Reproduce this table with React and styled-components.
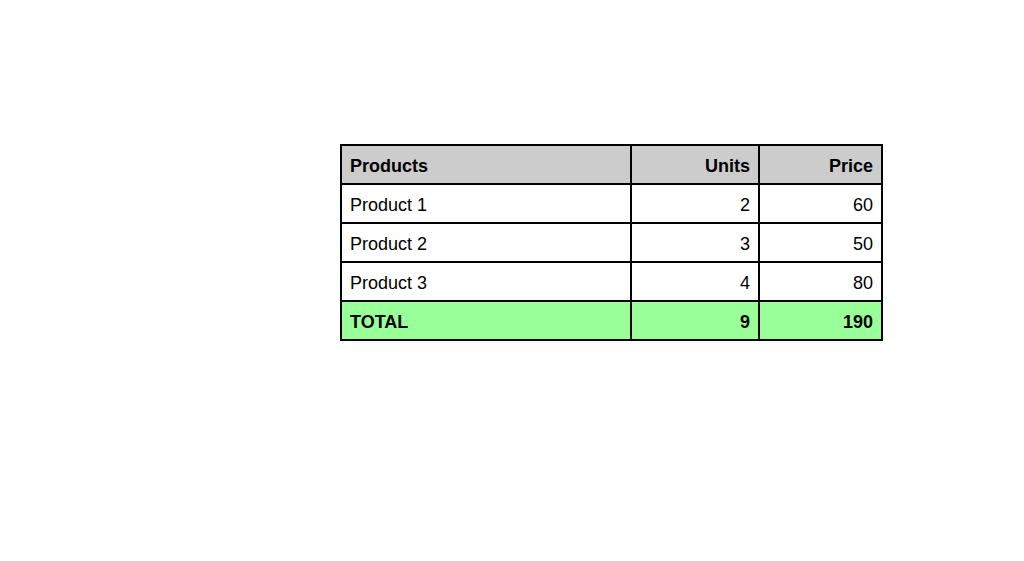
import React from 'react';
import styled, { createGlobalStyle } from 'styled-components';

const GlobalStyle = createGlobalStyle`
  html {
    background: #fff;
  }
  body {
    margin: 8px;
    background: #fff;
    color: #000;
    font-family: "Liberation Sans", Arial, sans-serif;
  }
`;

const Page = styled.div`
  min-height: 1280px;
  padding-top: 136px;
  padding-left: 332px;
`;

const Table = styled.table`
  width: 541px;
  border-collapse: collapse;
  table-layout: fixed;
  border: 2px solid #000;
  font-size: 18px;
`;

const Cell = styled.td`
  border: 2px solid #000;
  padding: 10px 8px 7px;
  line-height: 20px;
  text-align: ${(p) => (p.$right ? 'right' : 'left')};
  font-weight: ${(p) => (p.$bold ? 700 : 400)};
`;

const HeadRow = styled.tr`
  background: #ccc;
`;

const TotalRow = styled.tr`
  background: #9f9;
`;

const rows = [
  { name: 'Product 1', units: 2, price: 60 },
  { name: 'Product 2', units: 3, price: 50 },
  { name: 'Product 3', units: 4, price: 80 },
];

export default function App() {
  const units = rows.reduce((s, r) => s + r.units, 0);
  const price = rows.reduce((s, r) => s + r.price, 0);
  return (
    <Page>
      <GlobalStyle />
      <Table>
        <colgroup>
          <col style={{ width: 290 }} />
          <col style={{ width: 128 }} />
          <col style={{ width: 123 }} />
        </colgroup>
        <thead>
          <HeadRow>
            <Cell as="th" $bold>Products</Cell>
            <Cell as="th" $bold $right>Units</Cell>
            <Cell as="th" $bold $right>Price</Cell>
          </HeadRow>
        </thead>
        <tbody>
          {rows.map((r) => (
            <tr key={r.name}>
              <Cell>{r.name}</Cell>
              <Cell $right>{r.units}</Cell>
              <Cell $right>{r.price}</Cell>
            </tr>
          ))}
          <TotalRow>
            <Cell $bold>TOTAL</Cell>
            <Cell $bold $right>{units}</Cell>
            <Cell $bold $right>{price}</Cell>
          </TotalRow>
        </tbody>
      </Table>
    </Page>
  );
}
